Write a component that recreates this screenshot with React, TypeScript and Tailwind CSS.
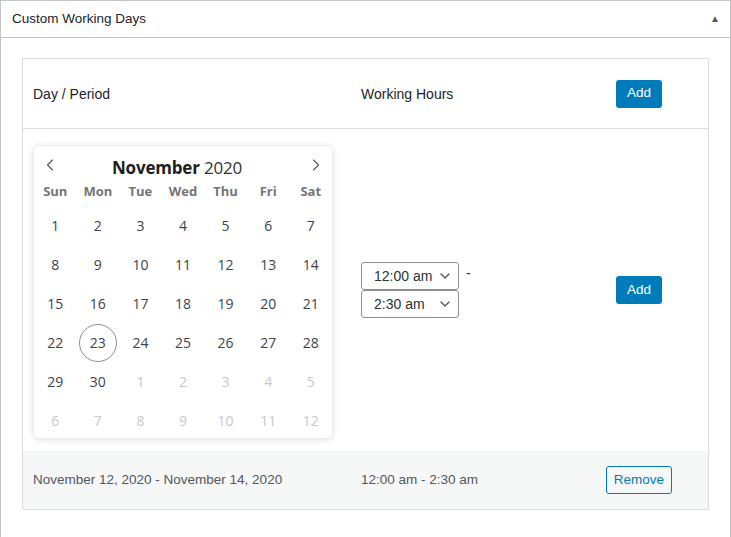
import { ChevronDown, ChevronLeft, ChevronRight } from "lucide-react"

const WEEKDAYS = ["Sun", "Mon", "Tue", "Wed", "Thu", "Fri", "Sat"]

// November 2020 starts on a Sunday; trailing days belong to December
const DAYS: { n: number; muted?: boolean }[] = [
  ...Array.from({ length: 30 }, (_, i) => ({ n: i + 1 })),
  ...Array.from({ length: 12 }, (_, i) => ({ n: i + 1, muted: true })),
]

const Calendar = () => (
  <div
    className="w-[300px] h-[294px] overflow-hidden rounded-[6px] bg-white shadow-[0_1px_6px_rgba(0,0,0,0.12)] border border-[#ededed]"
    style={{ fontFamily: '"Open Sans", sans-serif' }}
  >
    {/* Month header */}
    <div className="relative flex items-center justify-center h-[36px] pt-[8px]">
      <ChevronLeft className="absolute left-[6px] top-[9px] h-[20px] w-[20px] text-[#555]" strokeWidth={1.3} />
      <div className="text-[17px] text-[#1e1e1e] tracking-[-0.2px] mr-[12px]">
        <span className="font-bold">November</span> <span className="font-normal text-[#333]">2020</span>
      </div>
      <ChevronRight className="absolute right-[6px] top-[9px] h-[20px] w-[20px] text-[#555]" strokeWidth={1.3} />
    </div>

    {/* Weekdays */}
    <div className="grid grid-cols-7 h-[18px] items-center">
      {WEEKDAYS.map((d) => (
        <div key={d} className="text-center text-[13px] font-bold text-[#757575]">
          {d}
        </div>
      ))}
    </div>

    {/* Dates */}
    <div className="grid grid-cols-7 mt-[6px]">
      {DAYS.map((d, i) => (
        <div key={i} className="h-[39px] flex items-center justify-center">
          <span
            className={
              d.n === 23 && !d.muted
                ? "h-[38px] w-[38px] rounded-full border border-[#8c8f94] flex items-center justify-center text-[14px] text-[#3c434a]"
                : d.muted
                  ? "text-[14px] text-[#c8c8c8]"
                  : "text-[14px] text-[#3c434a]"
            }
          >
            {d.n}
          </span>
        </div>
      ))}
    </div>
  </div>
)

const TimeSelect = ({ value }: { value: string }) => (
  <div className="w-[98px] h-[28px] border border-[#8c8f94] rounded-[3px] bg-white flex items-center justify-between pl-[12px] pr-[5px] text-[14px] text-[#2c3338]">
    <span>{value}</span>
    <ChevronDown className="h-[16px] w-[16px] text-[#50575e]" strokeWidth={2} />
  </div>
)

const AddButton = () => (
  <button className="w-[46px] h-[28px] rounded-[3px] bg-[#007cba] text-white text-[13.5px] flex items-center justify-center">
    Add
  </button>
)

export default function App() {
  return (
    <div
      className="w-[731px] h-[537px] bg-white border-x border-t border-[#c3c4c7] overflow-hidden"
      style={{ fontFamily: '"Liberation Sans", Arial, sans-serif' }}
    >
      {/* Panel header */}
      <div className="h-[37px] flex items-center justify-between pl-[11px] pr-[10px] border-b border-[#c3c4c7]">
        <h2 className="text-[13.5px] text-[#1d2327]">Custom Working Days</h2>
        <span className="text-[10px] text-[#50575e] leading-none">▲</span>
      </div>

      {/* Panel body */}
      <div className="pl-[21px] pt-[20px]">
        <div className="w-[687px] border border-[#dcdcde] text-[13.5px] text-[#2c3338]">
          {/* Table head */}
          <div className="grid grid-cols-[328px_255px_66px] h-[70px] items-center border-b border-[#dcdcde] text-[#1d2327]">
            <div className="pl-[10px] pt-[2px] text-[14px]">Day / Period</div>
            <div className="pl-[10px] pt-[2px] text-[14px]">Working Hours</div>
            <div className="flex justify-center">
              <AddButton />
            </div>
          </div>

          {/* Entry row */}
          <div className="grid grid-cols-[328px_255px_66px] h-[322px] items-center">
            <div className="pl-[10px] self-start pt-[16px]">
              <Calendar />
            </div>
            <div className="pl-[10px] flex items-start gap-[7px]">
              <div className="flex flex-col">
                <TimeSelect value="12:00 am" />
                <TimeSelect value="2:30 am" />
              </div>
              <span className="text-[14px] leading-none mt-[4px]">-</span>
            </div>
            <div className="flex justify-center">
              <AddButton />
            </div>
          </div>

          {/* Saved row */}
          <div className="grid grid-cols-[328px_255px_66px] h-[58px] items-center bg-[#f6f7f7]">
            <div className="pl-[10px] text-[#50575e]">November 12, 2020 - November 14, 2020</div>
            <div className="pl-[10px] text-[#50575e]">12:00 am - 2:30 am</div>
            <div className="flex justify-center">
              <button className="w-[67px] h-[28px] rounded-[3px] border border-[#007cba] bg-[#f6f7f7] text-[#007cba] text-[13.5px] flex items-center justify-center">
                Remove
              </button>
            </div>
          </div>
        </div>
      </div>
    </div>
  )
}
